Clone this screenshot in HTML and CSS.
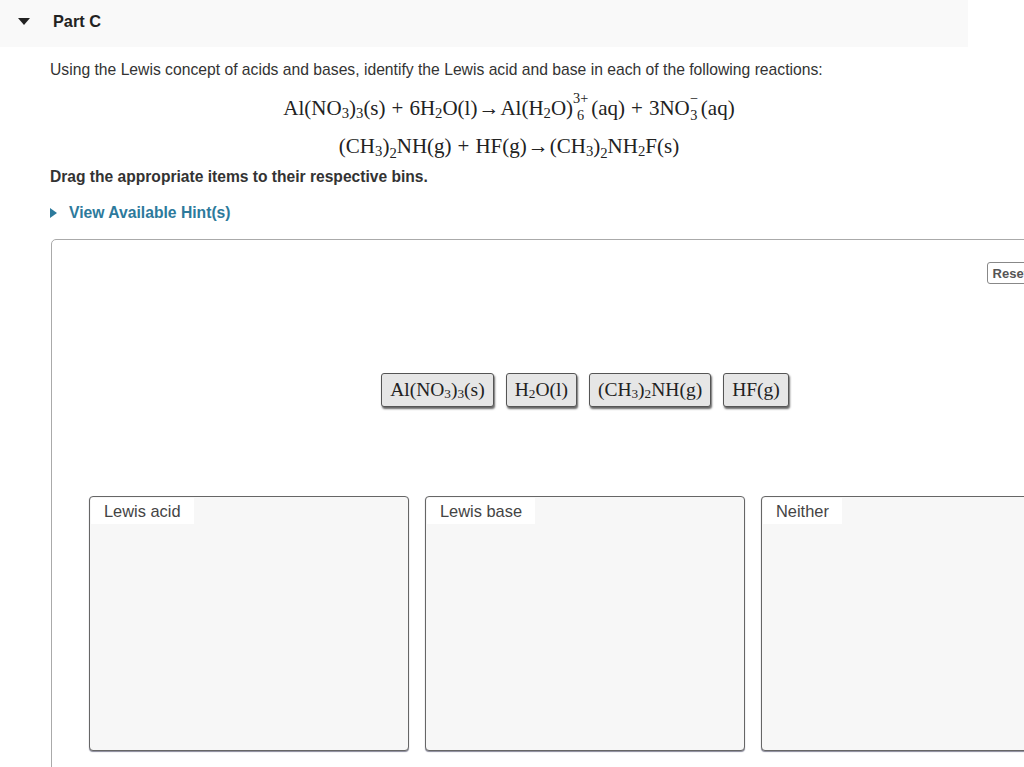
FILE: index.html
```html
<!DOCTYPE html>
<html>
<head>
<meta charset="utf-8">
<link rel="stylesheet" href="styles.css">
</head>
<body>
<div class="page">
  <div class="part-header">
    <span class="caret-down"></span>
    <span class="part-title">Part C</span>
  </div>
  <div class="content">
    <p class="prompt">Using the Lewis concept of acids and bases, identify the Lewis acid and base in each of the following reactions:</p>
    <div class="eq eq1">Al(NO<sub>3</sub>)<sub>3</sub>(s)<span class="op">+</span>6H<sub>2</sub>O(l)<span class="arrow">→</span>Al(H<sub>2</sub>O)<span class="ss"><span class="sup">3+</span><span class="sb">6</span></span>(aq)<span class="op">+</span>3NO<span class="ss"><span class="sup">−</span><span class="sb">3</span></span>(aq)</div>
    <div class="eq eq2">(CH<sub>3</sub>)<sub class="low">2</sub>NH(g)<span class="op">+</span>HF(g)<span class="arrow">→</span>(CH<sub>3</sub>)<sub class="low">2</sub>NH<sub>2</sub>F(s)</div>
    <p class="instr">Drag the appropriate items to their respective bins.</p>
    <div class="hint"><span class="caret-right"></span><span>View Available Hint(s)</span></div>
    <div class="dnd">
      <div class="reset-row"><button class="reset">Reset</button></div>
      <div class="items">
        <div class="chip"><span class="chip-text">Al(NO<sub>3</sub>)<sub>3</sub>(s)</span></div>
        <div class="chip"><span class="chip-text">H<sub>2</sub>O(l)</span></div>
        <div class="chip"><span class="chip-text">(CH<sub>3</sub>)<sub>2</sub>NH(g)</span></div>
        <div class="chip"><span class="chip-text">HF(g)</span></div>
      </div>
      <div class="bins">
        <div class="bin"><span class="bin-label">Lewis acid</span></div>
        <div class="bin"><span class="bin-label">Lewis base</span></div>
        <div class="bin"><span class="bin-label">Neither</span></div>
      </div>
    </div>
  </div>
</div>
</body>
</html>
```

FILE: styles.css
```css
html, body {
  margin: 0;
  padding: 0;
  background: #fff;
  overflow: hidden;
}
body {
  width: 1024px;
  height: 767px;
  font-family: "Liberation Sans", Arial, sans-serif;
  color: #333;
}
.page {
  width: 1200px;
}
.part-header {
  width: 968px;
  height: 47px;
  background: #f9f9f9;
  display: flex;
  align-items: center;
  box-sizing: border-box;
  padding-left: 18px;
  padding-bottom: 5px;
}
.caret-down {
  width: 0;
  height: 0;
  border-left: 6px solid transparent;
  border-right: 6px solid transparent;
  border-top: 7px solid #222;
  margin-right: 23px;
}
.part-title {
  font-weight: bold;
  font-size: 16.3px;
  color: #222;
}
.content {
  padding-left: 50px;
}
.prompt {
  margin: 14px 0 0 0;
  font-size: 15.7px;
  line-height: 18px;
  color: #333;
}
.eq {
  font-family: "Liberation Serif", "Times New Roman", serif;
  font-size: 21px;
  color: #222;
  text-align: center;
  width: 918px;
  white-space: nowrap;
  line-height: 30px;
}
.eq1 {
  margin-top: 14px;
}
.eq2 {
  margin-top: 8px;
}
.eq sub {
  font-size: 70%;
  vertical-align: -3px;
  line-height: 0;
}
.eq sub.low {
  vertical-align: -5px;
}
.op {
  margin: 0 6px;
}
.arrow {
  margin: 0 1px;
}
.ss {
  display: inline-block;
  font-size: 68%;
  line-height: 15px;
  vertical-align: -5px;
  margin-right: 3px;
}
.ss .sup, .ss .sb {
  display: block;
}
.ss .sup {
  position: relative;
  top: -2px;
}
.instr {
  margin: 7px 0 0 0;
  font-weight: bold;
  font-size: 15.6px;
  line-height: 18px;
  color: #333;
}
.hint {
  margin-top: 18px;
  display: flex;
  align-items: center;
  font-weight: bold;
  font-size: 15.7px;
  line-height: 18px;
  color: #2d7a9c;
}
.caret-right {
  width: 0;
  height: 0;
  border-top: 5px solid transparent;
  border-bottom: 5px solid transparent;
  border-left: 7px solid #2d7a9c;
  margin-right: 12px;
}
.dnd {
  margin-top: 17px;
  margin-left: 1px;
  width: 1068px;
  height: 560px;
  border: 1px solid #aaa;
  border-radius: 5px;
  box-sizing: border-box;
  padding: 22px 37px 0 37px;
}
.reset-row {
  display: flex;
  justify-content: flex-end;
  padding-right: 47px;
}
.reset {
  font-family: "Liberation Sans", Arial, sans-serif;
  font-weight: bold;
  font-size: 13px;
  color: #555;
  background: #fff;
  border: 1px solid #888;
  border-radius: 3px;
  height: 22px;
  padding: 0 5px;
}
.items {
  margin-top: 89px;
  display: flex;
  justify-content: center;
  gap: 12px;
}
.chip {
  font-family: "Liberation Serif", "Times New Roman", serif;
  font-size: 19.5px;
  color: #222;
  background: #e6e6e6;
  border: 1px solid #555;
  border-radius: 3px;
  box-shadow: 1px 2px 2px #666;
  height: 34px;
  box-sizing: border-box;
  padding: 0 8px;
  display: flex;
  align-items: center;
  white-space: nowrap;
}
.chip-text {
  line-height: 24px;
}
.chip sub {
  font-size: 68%;
  vertical-align: -2px;
  line-height: 0;
}
.bins {
  margin-top: 89px;
  display: flex;
  gap: 16px;
}
.bin {
  width: 320px;
  height: 255px;
  box-sizing: border-box;
  background: #f7f7f7;
  border: 1px solid #666;
  border-radius: 4px;
  box-shadow: 0 1px 1px #889;
  padding: 1px;
}
.bin-label {
  display: inline-block;
  background: #fff;
  font-size: 16.4px;
  color: #444;
  line-height: 26px;
  padding: 0 13px;
}
```
